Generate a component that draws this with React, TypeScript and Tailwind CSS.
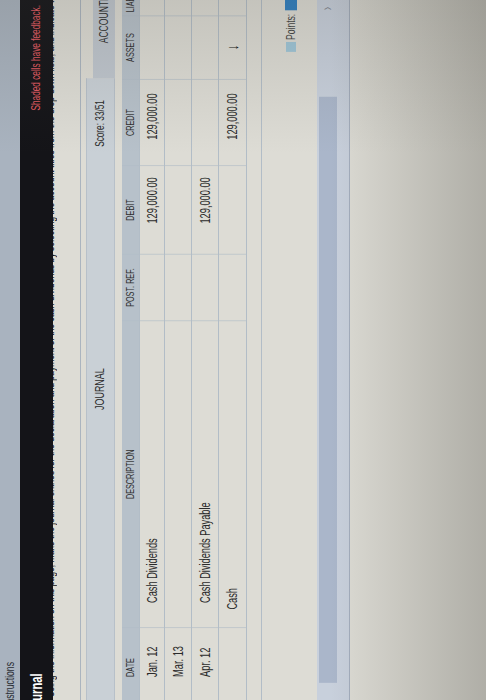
import React from "react";

const GRID = "grid grid-cols-[110px_465px_101px_134px_131px_96px_96px]";
const LINE = "border-[#b2bdc7]";

type Row = {
  h: string;
  date: string;
  desc: string;
  descPad: string;
  debit: string;
  credit: string;
  assets: string;
};

const rows: Row[] = [
  { h: "h-[25px]", date: "Jan. 12", desc: "Cash Dividends", descPad: "pl-[37px]", debit: "129,000.00", credit: "129,000.00", assets: "" },
  { h: "h-[27px]", date: "Mar. 13", desc: "", descPad: "pl-[37px]", debit: "", credit: "", assets: "" },
  { h: "h-[27px]", date: "Apr. 12", desc: "Cash Dividends Payable", descPad: "pl-[37px]", debit: "129,000.00", credit: "", assets: "" },
  { h: "h-[28px]", date: "", desc: "Cash", descPad: "pl-[27px]", debit: "", credit: "129,000.00", assets: "↓" },
];

export default function App() {
  return (
    <div className="relative w-[486px] h-[700px] overflow-hidden bg-[#d9d8d1] font-['Liberation_Sans',Arial,sans-serif]">
      <div className="w-[1061px] h-[486px] overflow-hidden origin-top-left [transform:translateY(700px)_rotate(-90deg)_scaleX(0.66)] bg-[#dddcd5] flex flex-col">
        {/* tab strip */}
        <div className="h-[20px] shrink-0 bg-[#a9b3bf] flex items-center overflow-hidden">
          <span className="ml-[-9px] text-[13px] text-[#2b2f36] whitespace-nowrap">Instructions</span>
        </div>
        {/* black bar */}
        <div className="h-[33px] shrink-0 bg-[#141418] flex items-center justify-between overflow-hidden">
          <span className="ml-[-21px] text-[17px] font-bold text-white whitespace-nowrap">Journal</span>
          <span className="mr-[8px] text-[12.5px] text-[#e35a62] whitespace-nowrap">Shaded cells have feedback.</span>
        </div>
        {/* partly hidden instruction line */}
        <div className="h-[4px] shrink-0 overflow-hidden">
          <p className="mt-[-11px] pl-[4px] whitespace-nowrap text-[13px] leading-[15px] text-[#111]">
            Using the information on this page, make the journal entries for the declaration and payment of the cash dividends by selecting the account titles from the drop-down lists, and indicate the effect of each entry on the accounting equation.
          </p>
        </div>
        <div className="h-[23px] shrink-0" />
        {/* panel */}
        <div className="shrink-0 border-t border-[#aab4bf] pt-[5px]">
          {/* title row */}
          <div className="h-[29px] flex">
            <div className="w-[942px] shrink-0 flex items-center bg-[#c9d0d6] border-y border-[#b7c0c9]">
              <div className="w-[300px]" />
              <div className="flex-1 text-center text-[13.5px] text-[#2a2a2a]">JOURNAL</div>
              <div className="w-[300px] text-right pr-[33px] text-[12.5px] text-[#2a2a2a]">Score: 33/51</div>
            </div>
            <div className="flex-1 flex items-center mt-[7px] bg-[#bfc6ce] pl-[53px] text-[13px] text-[#2a2a2a] whitespace-nowrap">
              ACCOUNTING EQUATION
            </div>
          </div>
          <div className="h-[7px]" />
          {/* header row */}
          <div className={`${GRID} h-[18px] bg-[#b7c1ca] text-[11px] text-[#2f2f2f] border-b ${LINE}`}>
            <div className={`flex items-center pl-[35px] border-r ${LINE}`}>DATE</div>
            <div className={`flex items-center justify-center border-r ${LINE}`}>DESCRIPTION</div>
            <div className={`flex items-center justify-center border-r ${LINE}`}>POST. REF.</div>
            <div className={`flex items-center justify-center border-r ${LINE}`}>DEBIT</div>
            <div className={`flex items-center justify-center border-r ${LINE}`}>CREDIT</div>
            <div className={`flex items-center justify-center border-r ${LINE}`}>ASSETS</div>
            <div className={`flex items-center pl-[5px] border-r ${LINE} whitespace-nowrap`}>LIABILITIES</div>
          </div>
          {/* body rows */}
          {rows.map((r, i) => (
            <div key={i} className={`${GRID} ${r.h} text-[14px] text-[#2a2a2a] border-b ${LINE}`}>
              <div className={`flex items-center pl-[35px] border-r ${LINE} whitespace-nowrap`}>{r.date}</div>
              <div className={`flex items-center ${r.descPad} border-r ${LINE} whitespace-nowrap`}>{r.desc}</div>
              <div className={`border-r ${LINE}`} />
              <div className={`flex items-center justify-end pr-[17px] border-r ${LINE}`}>{r.debit}</div>
              <div className={`flex items-center justify-end pr-[21px] border-r ${LINE}`}>{r.credit}</div>
              <div className={`flex items-center justify-center font-bold text-[16px] text-[#111] border-r ${LINE}`}>{r.assets}</div>
              <div className={`border-r ${LINE}`} />
            </div>
          ))}
          <div className="h-[14px]" />
          <div className={`border-t ${LINE}`} />
          {/* points */}
          <div className="mt-[22px] h-[14px] flex items-center pl-[982px] gap-[3px] whitespace-nowrap">
            <div className="w-[15px] h-[10px] bg-[#9fc6d8] shrink-0" />
            <span className="text-[13px] text-[#444]">Points:</span>
            <div className="ml-[2px] w-[30px] h-[12px] bg-[#2f7fc1] shrink-0" />
          </div>
          {/* scrollbar */}
          <div className="mt-[19px] h-[33px] bg-[#c8d0dc] border-b border-[#a3adbd] flex items-start pt-[2px]">
            <div className="ml-[26px] w-[888px] h-[18px] bg-[#aab6ca]" />
            <span className="ml-[131px] mt-[-1px] text-[16px] leading-[18px] text-[#7b818a]">›</span>
          </div>
        </div>
        <div className="flex-1" />
      </div>
      {/* lighting of the photographed screen */}
      <div className="pointer-events-none absolute inset-0 [background-image:linear-gradient(to_right,rgba(70,68,60,0)_0%,rgba(70,68,60,0)_68%,rgba(70,68,60,0.3)_100%),linear-gradient(to_bottom,rgba(70,68,60,0.16)_0%,rgba(70,68,60,0)_22%)]" />
    </div>
  );
}
